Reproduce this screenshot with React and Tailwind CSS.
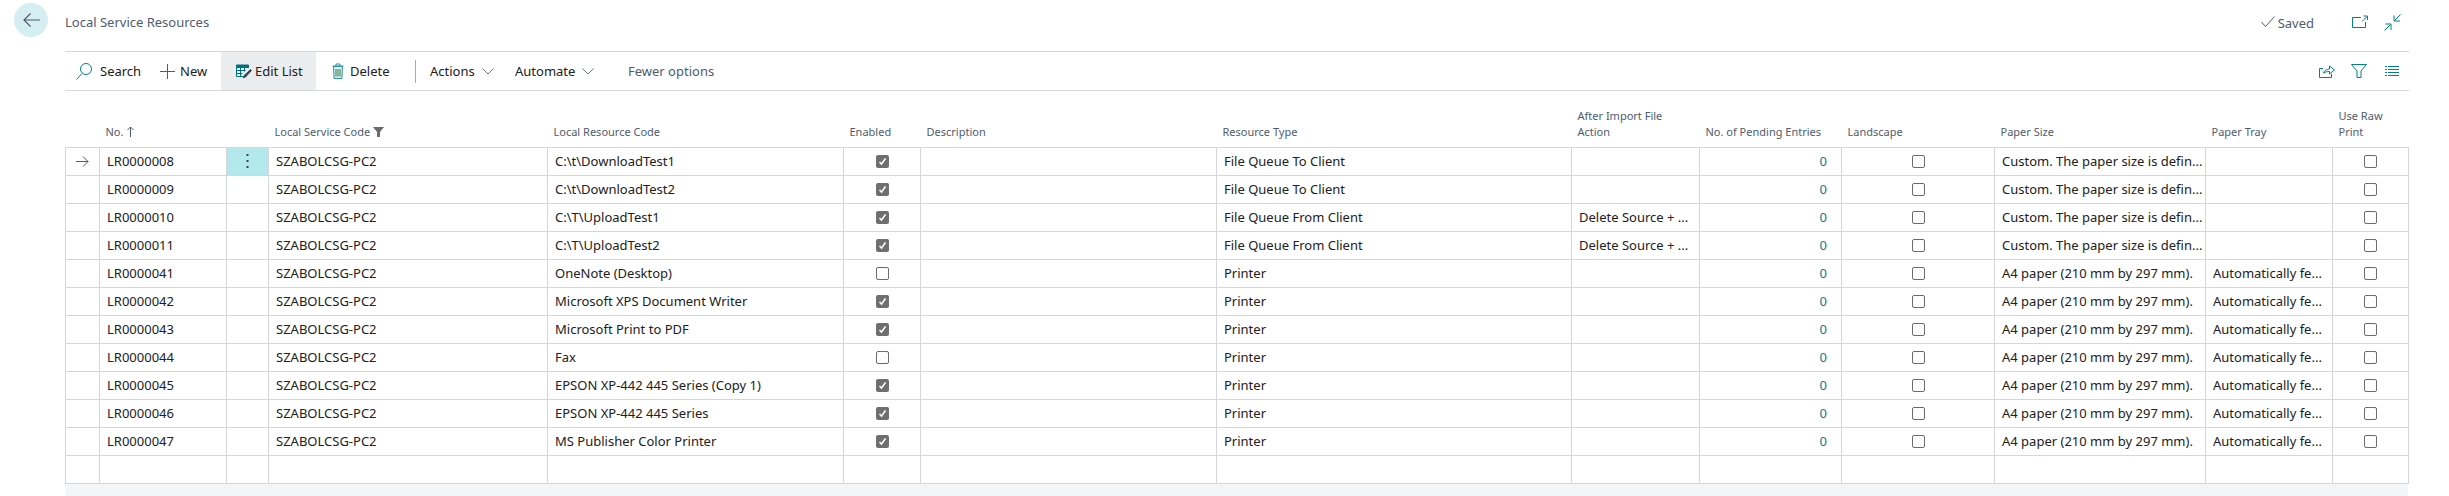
import React from 'react';

const rows = [
  ['LR0000008', 'C:\\t\\DownloadTest1', true, 'File Queue To Client', '', 'Custom. The paper size is defin...', ''],
  ['LR0000009', 'C:\\t\\DownloadTest2', true, 'File Queue To Client', '', 'Custom. The paper size is defin...', ''],
  ['LR0000010', 'C:\\T\\UploadTest1', true, 'File Queue From Client', 'Delete Source + ...', 'Custom. The paper size is defin...', ''],
  ['LR0000011', 'C:\\T\\UploadTest2', true, 'File Queue From Client', 'Delete Source + ...', 'Custom. The paper size is defin...', ''],
  ['LR0000041', 'OneNote (Desktop)', false, 'Printer', '', 'A4 paper (210 mm by 297 mm).', 'Automatically fe...'],
  ['LR0000042', 'Microsoft XPS Document Writer', true, 'Printer', '', 'A4 paper (210 mm by 297 mm).', 'Automatically fe...'],
  ['LR0000043', 'Microsoft Print to PDF', true, 'Printer', '', 'A4 paper (210 mm by 297 mm).', 'Automatically fe...'],
  ['LR0000044', 'Fax', false, 'Printer', '', 'A4 paper (210 mm by 297 mm).', 'Automatically fe...'],
  ['LR0000045', 'EPSON XP-442 445 Series (Copy 1)', true, 'Printer', '', 'A4 paper (210 mm by 297 mm).', 'Automatically fe...'],
  ['LR0000046', 'EPSON XP-442 445 Series', true, 'Printer', '', 'A4 paper (210 mm by 297 mm).', 'Automatically fe...'],
  ['LR0000047', 'MS Publisher Color Printer', true, 'Printer', '', 'A4 paper (210 mm by 297 mm).', 'Automatically fe...'],
];

const widths = [34, 127, 42, 279, 296, 77, 296, 355, 128, 142, 153, 211, 127, 76];

function Check({ on }) {
  if (!on) return <span className="block mx-auto w-[13px] h-[13px] rounded-[2px] border border-[#6b6b6b] bg-white" />;
  return (
    <span className="flex items-center justify-center mx-auto w-[13px] h-[13px] rounded-[2px] bg-[#6f6f6f]">
      <svg width="9" height="9" viewBox="0 0 9 9" fill="none" stroke="#fff" strokeWidth="1.5"><path d="M1.5 5l2 2 4-5.5" /></svg>
    </span>
  );
}

function Cell({ children, className = '' }) {
  return <td className={`border border-[#d5d6da] p-0 h-7 ${className}`}>{children}</td>;
}

function Head({ children, className = '' }) {
  return <th className={`font-normal text-left align-bottom px-[6px] pb-[7px] leading-[16px] ${className}`}>{children}</th>;
}

function EditListIcon() {
  return (
    <svg width="16" height="15" viewBox="0 0 16 15" fill="none" stroke="#00707a" strokeWidth="1">
      <path d="M.5 1.5h12v2H.5zM.5 3.5v9h7M4.5 3.5v9M8.5 3.5v4M.5 6.5h9M.5 9.5h6" />
      <path d="M.5 1h12v2.5H.5z" fill="#00707a" />
      <path d="M14.5 5.5l1 1-6 6.5-2 .8.7-2.2z" fill="#35454f" stroke="#35454f" />
    </svg>
  );
}

function TrashIcon() {
  return (
    <svg width="12" height="16" viewBox="0 0 12 16" fill="none" stroke="#2f8f9a" strokeWidth="1">
      <path d="M.5 3h11M4 3V1h4v2" />
      <path d="M1.5 3.5l.6 12h7.8l.6-12z" fill="#d8f0f2" />
      <path d="M4 6v7.5M6 6v7.5M8 6v7.5" stroke="#3a7d44" />
    </svg>
  );
}

function Chevron() {
  return (
    <svg width="12" height="7" viewBox="0 0 12 7" fill="none" stroke="#6b7280" strokeWidth="1"><path d="M.5.5l5.5 5.5L11.5.5" /></svg>
  );
}

export default function App() {
  return (
    <div className="w-[2449px] h-[496px] overflow-hidden bg-white text-[#212121] font-['Noto_Sans',sans-serif] text-[13px]">
      {/* Title bar */}
      <div className="flex h-[51px] pr-[48px]">
        <div className="ml-[14px] mt-[3px] w-[34px] h-[34px] rounded-full bg-[#d5eef1] flex items-center justify-center">
          <svg width="17" height="14" viewBox="0 0 17 14" fill="none" stroke="#505c6d" strokeWidth="1.2"><path d="M17 7H1M7.5.5L1 7l6.5 6.5" /></svg>
        </div>
        <div className="ml-[17px] mt-[13px] h-[18px] leading-[18px] text-[#505c6d]">Local Service Resources</div>
        <div className="ml-auto flex items-start mt-[14px]">
          <svg className="mt-[2px]" width="14" height="11" viewBox="0 0 14 11" fill="none" stroke="#505c6d"><path d="M.5 6l4 4.5L13.5.5" /></svg>
          <span className="ml-[3px] text-[#505c6d] leading-[18px]">Saved</span>
          <svg className="ml-[38px] mt-[1px]" width="16" height="13" viewBox="0 0 16 13" fill="none" stroke="#00808a"><path d="M9 2.5H.5v10h13V7M10 6.5l5-5M11.5 1h4v4" /></svg>
          <svg className="ml-[16px]" width="17" height="17" viewBox="0 0 17 17" fill="none" stroke="#00808a"><path d="M10.5 6.5l6-6M10 1.5v5.5h6M6.5 10.5l-6 6M1.5 10h5.5v6" /></svg>
        </div>
      </div>

      {/* Action bar */}
      <div className="ml-[65px] w-[2344px] h-[40px] border-y border-[#d5d6da] flex items-center">
        <svg className="ml-[11px]" width="16" height="17" viewBox="0 0 16 17" fill="none" stroke="#00808a"><circle cx="10" cy="6" r="5.5" /><path d="M6 10.5l-5.5 6" /></svg>
        <span className="ml-[8px] w-[41px] pt-[1px]">Search</span>
        <svg className="ml-[19px]" width="15" height="15" viewBox="0 0 15 15" fill="none" stroke="#00808a"><path d="M7.5 0v15M0 7.5h15" /></svg>
        <span className="ml-[5px] w-[27px] pt-[1px]">New</span>
        <div className="ml-[14px] w-[95px] h-[38px] bg-[#ebecee] rounded-[2px] flex items-center pl-[15px]">
          <EditListIcon />
          <span className="ml-[3px] pt-[1px]">Edit List</span>
        </div>
        <span className="ml-[16px] flex"><TrashIcon /></span>
        <span className="ml-[6px] w-[40px] pt-[1px]">Delete</span>
        <span className="ml-[25px] w-px h-[23px] bg-[#a6abb3]" />
        <span className="ml-[14px] w-[46px] pt-[1px]">Actions</span>
        <span className="ml-[6px] flex"><Chevron /></span>
        <span className="ml-[21px] w-[61px] pt-[1px]">Automate</span>
        <span className="ml-[6px] flex"><Chevron /></span>
        <span className="ml-[34px] pt-[1px] text-[#505c6d]">Fewer options</span>
        <div className="ml-auto mr-[10px] flex items-center">
          <svg width="16" height="14" viewBox="0 0 16 14" fill="none" stroke="#00808a"><path d="M4 4.5H.5v9h12V10M4.5 9c1-3 4-4 6-4V2l5 4-5 4V7.5c-2 0-4 .3-6 1.5z" /></svg>
          <svg className="ml-[16px]" width="16" height="14" viewBox="0 0 16 14" fill="none" stroke="#00808a"><path d="M.5.5h15L10 7v6.5H6V7z" /></svg>
          <svg className="ml-[18px]" width="14" height="10" viewBox="0 0 14 10" fill="none" stroke="#00808a"><path d="M0 .5h2M3 .5h11M0 3.5h2M3 3.5h11M0 6.5h2M3 6.5h11M0 9.5h2M3 9.5h11" /></svg>
        </div>
      </div>

      {/* List */}
      <div className="ml-[65px] w-[2343px] mt-[16px]">
        <table className="table-fixed border-collapse w-[2343px]">
          <colgroup>
            {widths.map((w, i) => <col key={i} style={{ width: w }} />)}
          </colgroup>
          <thead className="text-[#505c6d] text-[11px]">
            <tr className="h-[40px]">
              <Head />
              <Head>
                <span className="inline-flex items-center gap-[4px]">
                  No.
                  <svg width="7" height="11" viewBox="0 0 7 11" fill="none" stroke="#505c6d"><path d="M3.5 11V1M.5 4l3-3 3 3" /></svg>
                </span>
              </Head>
              <Head />
              <Head>
                <span className="inline-flex items-center gap-[3px]">
                  Local Service Code
                  <svg width="11" height="10" viewBox="0 0 11 10" fill="#6b6b6b"><path d="M0 0h11L7 5v5H4V5z" /></svg>
                </span>
              </Head>
              <Head>Local Resource Code</Head>
              <Head>Enabled</Head>
              <Head>Description</Head>
              <Head>Resource Type</Head>
              <Head>After Import File<br />Action</Head>
              <Head>No. of Pending Entries</Head>
              <Head>Landscape</Head>
              <Head>Paper Size</Head>
              <Head>Paper Tray</Head>
              <Head>Use Raw<br />Print</Head>
            </tr>
          </thead>
          <tbody>
            {rows.map((r, i) => (
              <tr key={r[0]}>
                <Cell className="text-center">
                  {i === 0 && (
                    <svg className="mx-auto" width="13" height="11" viewBox="0 0 13 11" fill="none" stroke="#505c6d"><path d="M0 5.5h12M7 .5l5 5-5 5" /></svg>
                  )}
                </Cell>
                <Cell className="px-[7px] pt-[2px]">{r[0]}</Cell>
                <Cell className={i === 0 ? 'bg-[#b3e8ec] text-center' : ''}>
                  {i === 0 && (
                    <svg className="mx-auto" width="3" height="14" viewBox="0 0 3 14" fill="#35454f"><rect x="0.5" width="2" height="2" /><rect x="0.5" y="6" width="2" height="2" /><rect x="0.5" y="12" width="2" height="2" /></svg>
                  )}
                </Cell>
                <Cell className="px-[7px] pt-[2px]">SZABOLCSG-PC2</Cell>
                <Cell className="px-[7px] pt-[2px]">{r[1]}</Cell>
                <Cell><Check on={r[2]} /></Cell>
                <Cell />
                <Cell className="px-[7px] pt-[2px]">{r[3]}</Cell>
                <Cell className="px-[7px] pt-[2px] whitespace-nowrap overflow-hidden">{r[4]}</Cell>
                <Cell className="pr-[14px] pt-[2px] text-right text-[#00808a]">0</Cell>
                <Cell><Check on={false} /></Cell>
                <Cell className="px-[7px] pt-[2px] whitespace-nowrap overflow-hidden">{r[5]}</Cell>
                <Cell className="px-[7px] pt-[2px] whitespace-nowrap overflow-hidden">{r[6]}</Cell>
                <Cell><Check on={false} /></Cell>
              </tr>
            ))}
            <tr>
              {widths.map((w, i) => <Cell key={i} />)}
            </tr>
          </tbody>
        </table>
        <div className="h-[13px] bg-[#f4f5f6]" />
      </div>
    </div>
  );
}
